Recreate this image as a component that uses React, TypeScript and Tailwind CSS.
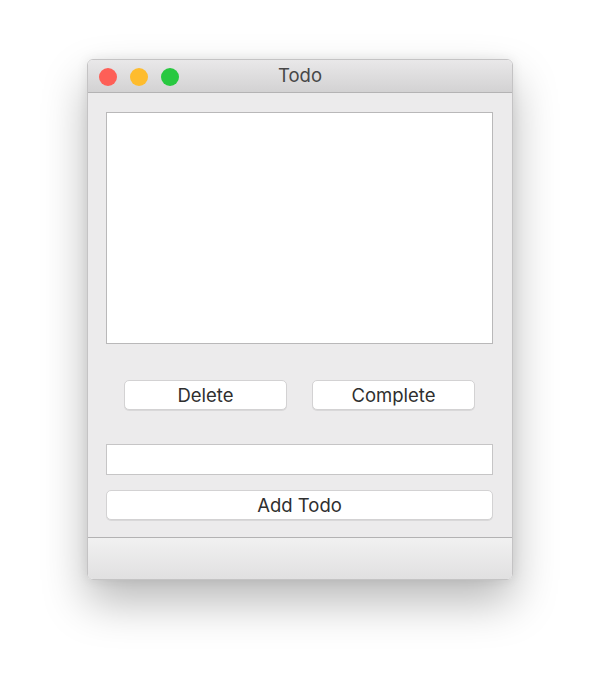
import React, { useState } from "react";

// macOS-style window chrome with a tiny todo app inside
const font = { fontFamily: "Inter, 'Noto Sans', sans-serif" };

const MacButton = ({ label, className = "" }: { label: string; className?: string }) => (
    <button
        className={`h-[30px] rounded-[5px] bg-white border border-[#d3d2d3] shadow-[0_1px_0_rgba(0,0,0,0.08)] text-[18.5px] text-[#2f2f2f] leading-none ${className}`}
    >
        {label}
    </button>
);

const App = () => {
    const [text, setText] = useState("");

    return (
        <div className="w-[600px] h-[695px] bg-white flex justify-center pt-[59px]" style={font}>
            <div className="w-[426px] h-[521px] flex flex-col rounded-[6px] overflow-hidden border border-[#c4c3c4] shadow-[0_22px_45px_rgba(0,0,0,0.28),0_0_12px_rgba(0,0,0,0.08)]">
                {/* title bar */}
                <div className="relative h-[33px] shrink-0 flex items-center justify-center bg-gradient-to-b from-[#e9e8e9] to-[#d3d2d3] border-b border-[#b4b3b4]">
                    <div className="absolute left-[11px] top-[8px] flex gap-[13px]">
                        <span className="w-[18px] h-[18px] rounded-full bg-[#fe5f57]" />
                        <span className="w-[18px] h-[18px] rounded-full bg-[#febc2e]" />
                        <span className="w-[18px] h-[18px] rounded-full bg-[#28c840]" />
                    </div>
                    <span className="text-[18.5px] text-[#474747]">Todo</span>
                </div>

                {/* body */}
                <div className="flex-1 bg-[#ecebec] pl-[18px] pr-[19px] pt-[19px] flex flex-col">
                    <div className="h-[232px] bg-white border border-[#b9b8b9]" />

                    <div className="flex gap-[25px] px-[18px] mt-[36px]">
                        <MacButton label="Delete" className="flex-1" />
                        <MacButton label="Complete" className="flex-1" />
                    </div>

                    <input
                        value={text}
                        onChange={e => setText(e.target.value)}
                        className="mt-[34px] h-[31px] bg-white border border-[#c6c5c6] outline-none px-2 text-[16px]"
                    />

                    <MacButton label="Add Todo" className="mt-[15px] w-full" />
                </div>

                {/* bottom bar */}
                <div className="h-[42px] shrink-0 border-t border-[#b3b2b3] bg-gradient-to-b from-[#f1f1f1] to-[#e1e0e1]" />
            </div>
        </div>
    );
};

export default App;
